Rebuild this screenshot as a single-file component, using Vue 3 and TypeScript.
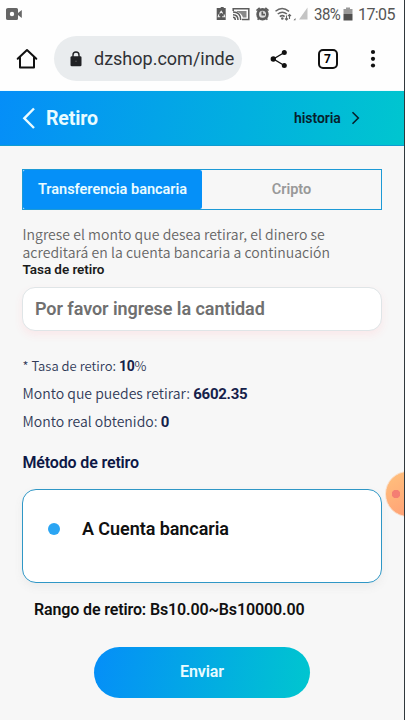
<script setup lang="ts">
import { ref } from 'vue'

type Tab = { id: string; label: string }

const tabs: Tab[] = [
  { id: 'bank', label: 'Transferencia bancaria' },
  { id: 'crypto', label: 'Cripto' },
]
const active = ref('bank')
const amount = ref('')
</script>

<template>
  <div class="screen">
    <div class="status">
      <svg class="cam" width="17" height="12" viewBox="0 0 17 12">
        <path fill="#666" fill-rule="evenodd" d="M2 0h8.500q1.500 0 1.500 1.500v9q0 1.500-1.500 1.500H2Q0 12 0 10.500v-9Q0 0 2 0zM6 3.800a2.200 2.200 0 1 0 0 4.400a2.200 2.200 0 1 0 0-4.400z" />
        <path fill="#666" d="M12 5l3.800-3v8L12 7z" />
      </svg>
      <svg class="icons" width="94" height="16" viewBox="0 0 94 16">
        <path fill="#595959" d="M3.500 2h2V1h3v1h2v12h-9V2z" transform="translate(-.8 0)" />
        <path fill="none" stroke="#eee" stroke-width="1.100" d="M3.700 7.500L5.200 5.300l1.500 2.200M8 8.500l.7 2.200H6.200M4.200 10.700H2.200l.7-2.400" />
        <path fill="none" stroke="#5c5c5c" stroke-width="1.500" d="M17.200 5V2.700h15.600v10.800H26M17 11.300q2.300 0 2.300 2.700M17 8.700q5 0 5 5.300M17 6.100q7.700 0 7.700 7.900" />
        <path fill="#888" d="M21 5h9.500v6.500H27Q25.500 6.800 21 6z" />
        <circle cx="46.500" cy="8.300" r="4.900" fill="#ddd" stroke="#5c5c5c" stroke-width="2.700" />
        <path fill="none" stroke="#5c5c5c" stroke-width="1.700" d="M40.500 4.700l3.200-2.800M52.500 4.700l-3.200-2.800M46.300 5.500v3.200H49M43 12l-1.300 1.800M50 12l1.300 1.800" />
        <path fill="none" stroke="#666" stroke-width="1.500" d="M59.500 5.300q6.500-5.500 13.500 0M61.700 8q4.700-3.600 9.200 0M63.800 10.600q2.700-2 4.800 0" />
        <circle cx="66.300" cy="12.500" r="1.300" fill="#666" />
        <path fill="none" stroke="#666" stroke-width="1.100" d="M70.500 9.500V14M69 12.500l1.500 1.500l1.500-1.500M73.500 13V8.500M72 10l1.500-1.500L75 10" />
        <path fill="#c4c4c4" d="M91.500 1.500v12H83z" />
        <path fill="#666" d="M79.500 12v2.200h-2z" />
      </svg>
      <span class="pct">38%</span>
      <svg class="batt" width="10" height="14" viewBox="0 0 10 14">
        <path fill="#999" d="M.5 2h2.500V.5h4V2h2.500v5h-9z" />
        <path fill="#505050" d="M.5 7h9v6.500h-9z" />
      </svg>
      <span class="clock">17:05</span>
    </div>

    <div class="browser">
      <svg class="home" width="22" height="22" viewBox="0 0 22 22">
        <path fill="none" stroke="#111" stroke-width="2" stroke-linejoin="round" stroke-linecap="round" d="M1.700 10.700L11 2l9.300 8.700M4 9.500V19.500h14V9.500" />
      </svg>
      <div class="address">
        <svg width="12" height="16" viewBox="0 0 12 16">
          <path fill="none" stroke="#202124" stroke-width="1.400" d="M3 6V4a3 3 0 0 1 6 0v2" />
          <rect x=".5" y="5.300" width="11" height="10" rx="1.300" fill="#202124" />
          <circle cx="6" cy="10.200" r=".8" fill="#555" />
        </svg>
        <span class="url">dzshop.com/inde</span>
      </div>
      <svg class="share" width="18" height="20" viewBox="0 0 18 20">
        <path fill="none" stroke="#111" stroke-width="1.400" d="M14.300 3.500L3.500 10l10.800 6.500" />
        <circle cx="14.300" cy="3.500" r="2.500" fill="#111" /><circle cx="3.300" cy="10" r="2.700" fill="#111" /><circle cx="14.300" cy="16.500" r="2.500" fill="#111" />
      </svg>
      <div class="count">7</div>
      <svg class="dots" width="6" height="20" viewBox="0 0 6 20">
        <circle cx="3" cy="3" r="2.100" fill="#111" /><circle cx="3" cy="9.800" r="2.100" fill="#111" /><circle cx="3" cy="16.500" r="2.100" fill="#111" />
      </svg>
    </div>

    <header class="bar">
      <svg class="back" width="14" height="24" viewBox="0 0 14 24">
        <path fill="none" stroke="#e9fbff" stroke-width="2.400" d="M12 2.500L2.300 12.300L12 22" />
      </svg>
      <h1>Retiro</h1>
      <span class="history">historia</span>
      <svg width="9" height="14" viewBox="0 0 9 14">
        <path fill="none" stroke="#07202c" stroke-width="1.600" d="M1.500 1.200L7.300 7l-5.800 5.800" />
      </svg>
    </header>

    <main>
      <div class="tabs">
        <button v-for="t in tabs" :key="t.id" :class="{ on: active === t.id }" @click="active = t.id">
          <span>{{ t.label }}</span>
        </button>
      </div>
      <div class="intro">
        <p>Ingrese el monto que desea retirar, el dinero se</p>
        <p>acreditará en la cuenta bancaria a continuación</p>
      </div>
      <label class="rate">Tasa de retiro</label>
      <input v-model="amount" class="amount" placeholder="Por favor ingrese la cantidad">
      <div class="facts">
        <p class="small">* Tasa de retiro: <b>10</b>%</p>
        <p>Monto que puedes retirar: <b>6602.35</b></p>
        <p>Monto real obtenido: <b>0</b></p>
      </div>
      <h2>Método de retiro</h2>
      <div class="card"><i class="radio"></i><span>A Cuenta bancaria</span></div>
      <p class="range">Rango de retiro: Bs10.00~Bs10000.00</p>
      <button class="send">Enviar</button>
    </main>
    <div class="bubble"></div>
    <div class="edge"></div>
  </div>
</template>

<style>
body { overflow: hidden; }
</style>

<style scoped>
* { box-sizing: border-box; }
p, h1, h2 { margin: 0; }
button { border: 0; padding: 0; font: inherit; }
svg { flex: none; display: block; }
.screen { position: relative; width: 405px; height: 720px; overflow: hidden; background: #f7f7f7; font-family: Roboto, sans-serif; white-space: nowrap; }
.status { height: 28px; background: #fefefe; display: flex; align-items: center; padding-left: 6px; color: #555; }
.cam { margin-right: 193px; }
.icons { margin-right: 4px; }
.pct { width: 27px; font-size: 15px; letter-spacing: -.5px; transform: scaleY(1.120); }
.batt { margin: 0 5px 0 2px; }
.clock { font-size: 16px; letter-spacing: -.6px; transform: scaleY(1.080); }
.browser { height: 63px; background: #fefefe; display: flex; align-items: center; padding: 0 0 1px 16px; border-bottom: 1px solid #effcff; }
.address { margin-left: 16px; width: 188px; height: 45px; border-radius: 23px; background: #e9ecee; display: flex; align-items: center; padding-left: 16px; gap: 12px; overflow: hidden; }
.url { font-size: 18px; color: #303236; }
.share { margin-left: 28px; }
.count { margin-left: 29.500px; width: 20px; height: 20px; border: 2px solid #111; border-radius: 5px; font: bold 12px/16px Roboto, sans-serif; text-align: center; }
.dots { margin-left: 32px; }
.bar { height: 55px; display: flex; align-items: center; padding-left: 22px; background: linear-gradient(100deg, #058ef8, #00c6cf); border-bottom: 1px solid #109cd0; }
.bar h1 { margin-left: 10px; padding-top: 1px; width: 238px; color: #e9fbff; font-size: 19.500px; line-height: 24px; font-weight: 700; letter-spacing: -.15px; }
.history { margin-left: 10px; width: 57px; color: #07202c; font-size: 14px; font-weight: 600; letter-spacing: -.07px; }
main { padding: 23px 23px 0 22px; }
.tabs { height: 41px; display: grid; grid-template-columns: 179px 1fr; border: 1px solid #1d9ad6; width: 360px; }
.tabs button { background: transparent; color: #999; font-size: 14.500px; font-weight: 600; letter-spacing: -.01px; padding-bottom: 1px; }
.tabs button.on { color: #e9fbff; background: #0590f8; border-radius: 2px; }
.intro { margin-top: 15px; height: 36px; font: 350 14px/18px "Noto Sans CJK SC", sans-serif; color: #666; letter-spacing: .04px; }
.intro p { height: 18px; padding-left: .5px; }
.rate { display: block; height: 25.500px; padding: 0 0 0 .5px; color: #1b1b1b; font-weight: 600; font-size: 13.500px; line-height: 16px; letter-spacing: -.06px; }
.amount { display: block; width: 360px; height: 44px; margin-bottom: 1px; border: 1px solid #dfe5e7; border-radius: 13px; background: #fff; padding: 0 12px; font: 600 18px Roboto, sans-serif; letter-spacing: -.06px; box-shadow: 0 4px 8px #fae8ea; }
.amount::placeholder { color: #707070; opacity: 1; }
.facts { padding: 20px 0 0 .5px; height: 105px; font: 350 14px/28px "Noto Sans CJK SC", sans-serif; color: #303a57; letter-spacing: .02px; }
.facts p { height: 27.700px; }
.facts .small { font-size: 13px; }
.facts b { font-family: Roboto, sans-serif; font-weight: 700; font-size: 15px; line-height: 1; color: #15214a; letter-spacing: -.25px; }
.facts .small b { font-size: 14px; }
h2 { margin-top: 15px; height: 37.500px; padding-left: .5px; font-size: 16px; font-weight: 600; line-height: 22px; color: #0d1846; letter-spacing: -.15px; }
.card { width: 360px; height: 94px; border: 1px solid #2f97c6; border-radius: 14px; background: #fff; box-shadow: 0 4px 8px #ececec; display: flex; align-items: center; padding: 0 0 15px 25px; font-size: 18px; font-weight: 600; color: #101010; gap: 22px; letter-spacing: -.06px; }
.radio { width: 12px; height: 12px; border-radius: 50%; background: #2ba5f3; }
.range { margin: 17px 0 0 12px; height: 47px; font-size: 16px; line-height: 20px; font-weight: 600; color: #101010; letter-spacing: -.13px; }
.send { display: block; margin-left: 72px; width: 216px; height: 51px; padding-bottom: 2px; border-radius: 26px; background: linear-gradient(100deg, #058ef8, #00c6cf); color: #e9fbff; font-size: 16px; font-weight: 600; letter-spacing: -.1px; }
.bubble { position: absolute; left: 385px; top: 471px; width: 46px; height: 46px; border-radius: 50%; border: 1px solid #fae1ce; background: radial-gradient(circle at 10px 22px, #f47e73 0 4px, transparent 4.500px), linear-gradient(150deg, #ffc27d, #ff9974); }
.edge { position: absolute; right: 0; top: 0; width: 1px; height: 720px; background: #30383c; }
</style>
